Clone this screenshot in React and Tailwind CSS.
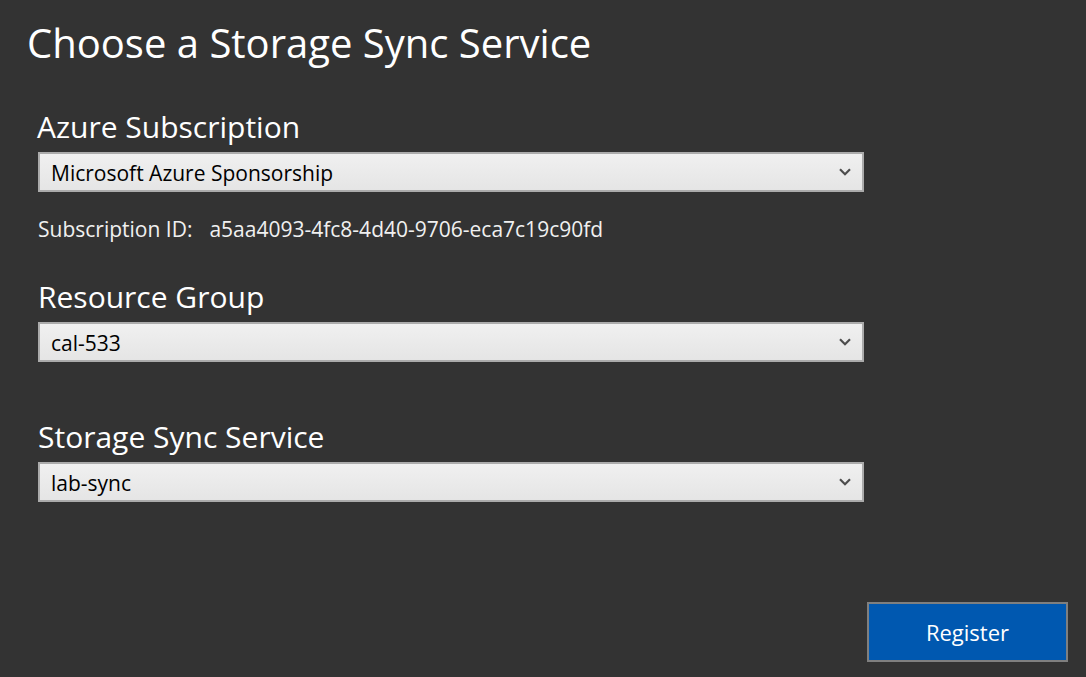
import React from "react";

const font = { fontFamily: '"Open Sans", "Noto Sans", sans-serif' };

function Chevron() {
  return (
    <svg width="12" height="8" viewBox="0 0 12 8" className="shrink-0">
      <path d="M1 1.2 L6 6.2 L11 1.2" fill="none" stroke="#4d4d4d" strokeWidth="2.2" />
    </svg>
  );
}

function Select({ value }) {
  return (
    <div className="flex h-[40px] w-[826px] items-center justify-between border-2 border-[#ababab] bg-gradient-to-b from-[#f0f0f0] to-[#e5e5e5] pl-[11px] pr-[11px]">
      <span className="mt-[3px] text-[21px] leading-none text-black">{value}</span>
      <Chevron />
    </div>
  );
}

export default function App() {
  return (
    <div style={font} className="relative flex h-[677px] w-[1086px] flex-col bg-[#333333] text-white">
      <h1 className="ml-[27px] mt-[18px] text-[40px] leading-[50px] font-normal">Choose a Storage Sync Service</h1>
      <div className="ml-[38px] mt-[41px] flex flex-col">
        <div className="text-[30px] leading-[36px] -ml-[1px]">Azure Subscription</div>
        <div className="mt-[7px]"><Select value="Microsoft Azure Sponsorship" /></div>
        <div className="mt-[23px] flex text-[21px] leading-[28px] text-[#f0f0f0]">
          <span>Subscription ID:</span>
          <span className="ml-[17px]">a5aa4093-4fc8-4d40-9706-eca7c19c90fd</span>
        </div>
        <div className="mt-[36px] text-[30px] leading-[36px]">Resource Group</div>
        <div className="mt-[7px]"><Select value="cal-533" /></div>
        <div className="mt-[57px] text-[30px] leading-[36px]">Storage Sync Service</div>
        <div className="mt-[7px]"><Select value="lab-sync" /></div>
      </div>
      <div className="mt-auto mb-[15px] mr-[18px] flex justify-end">
        <button className="flex h-[60px] w-[201px] items-center justify-center border-2 border-[#7f7f7f] bg-[#0058b0] text-[22px] text-white">Register</button>
      </div>
    </div>
  );
}
